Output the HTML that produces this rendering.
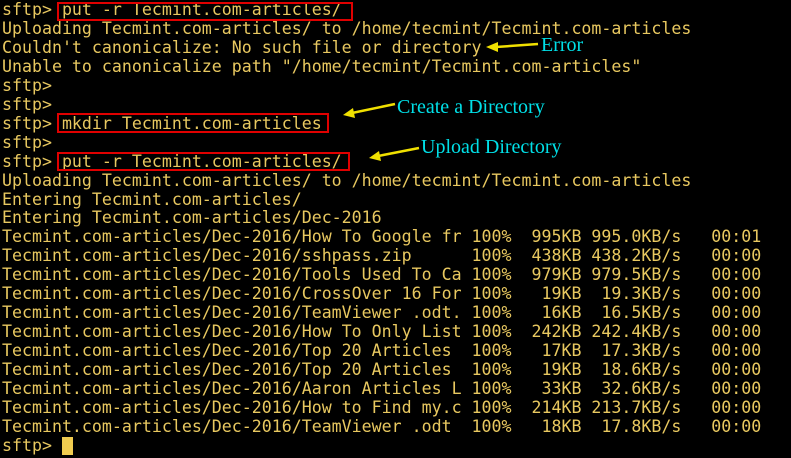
<!DOCTYPE html>
<html><head><meta charset="utf-8"><style>
html,body{margin:0;padding:0;background:#000;}
body{width:791px;height:458px;overflow:hidden;position:relative;}
pre{margin:0;position:absolute;left:2px;top:1px;font-family:"DejaVu Sans Mono","Liberation Mono",monospace;font-size:16.6px;line-height:18.96px;color:#e8c860;}
.box{position:absolute;border:2px solid #e00000;box-sizing:border-box;}
.lbl{position:absolute;font-family:"Liberation Serif",serif;font-size:20px;color:#00e0e8;white-space:nowrap;}
.cur{position:absolute;left:62px;top:437px;width:11px;height:18px;background:#f0cc50;}
</style></head><body>
<pre>sftp&gt; put -r Tecmint.com-articles/
Uploading Tecmint.com-articles/ to /home/tecmint/Tecmint.com-articles
Couldn't canonicalize: No such file or directory
Unable to canonicalize path "/home/tecmint/Tecmint.com-articles"
sftp&gt;
sftp&gt;
sftp&gt; mkdir Tecmint.com-articles
sftp&gt;
sftp&gt; put -r Tecmint.com-articles/
Uploading Tecmint.com-articles/ to /home/tecmint/Tecmint.com-articles
Entering Tecmint.com-articles/
Entering Tecmint.com-articles/Dec-2016
Tecmint.com-articles/Dec-2016/How To Google fr 100%  995KB 995.0KB/s   00:01
Tecmint.com-articles/Dec-2016/sshpass.zip      100%  438KB 438.2KB/s   00:00
Tecmint.com-articles/Dec-2016/Tools Used To Ca 100%  979KB 979.5KB/s   00:00
Tecmint.com-articles/Dec-2016/CrossOver 16 For 100%   19KB  19.3KB/s   00:00
Tecmint.com-articles/Dec-2016/TeamViewer .odt. 100%   16KB  16.5KB/s   00:00
Tecmint.com-articles/Dec-2016/How To Only List 100%  242KB 242.4KB/s   00:00
Tecmint.com-articles/Dec-2016/Top 20 Articles  100%   17KB  17.3KB/s   00:00
Tecmint.com-articles/Dec-2016/Top 20 Articles  100%   19KB  18.6KB/s   00:00
Tecmint.com-articles/Dec-2016/Aaron Articles L 100%   33KB  32.6KB/s   00:00
Tecmint.com-articles/Dec-2016/How to Find my.c 100%  214KB 213.7KB/s   00:00
Tecmint.com-articles/Dec-2016/TeamViewer .odt  100%   18KB  17.8KB/s   00:00
sftp&gt; </pre>
<div class="cur"></div>
<div class="box" style="left:57px;top:2px;width:296px;height:19px"></div>
<div class="box" style="left:57px;top:113px;width:272px;height:20px"></div>
<div class="box" style="left:57px;top:152px;width:293px;height:19px"></div>
<div class="lbl" style="left:541px;top:34px">Error</div>
<div class="lbl" style="left:397px;top:96px">Create a Directory</div>
<div class="lbl" style="left:421px;top:136px">Upload Directory</div>
<svg width="791" height="458" style="position:absolute;left:0;top:0">
<g stroke="#f0e000" stroke-width="2.5" fill="#f0e000">
<line x1="538" y1="44" x2="496" y2="47"/><polygon points="486,47 498,42 498,52" stroke="none"/>
<line x1="395" y1="104" x2="352" y2="113"/><polygon points="343,115 353,108 355,118" stroke="none"/>
<line x1="419" y1="148" x2="378" y2="156"/><polygon points="369,158 379,151 381,161" stroke="none"/>
</g></svg>
</body></html>
